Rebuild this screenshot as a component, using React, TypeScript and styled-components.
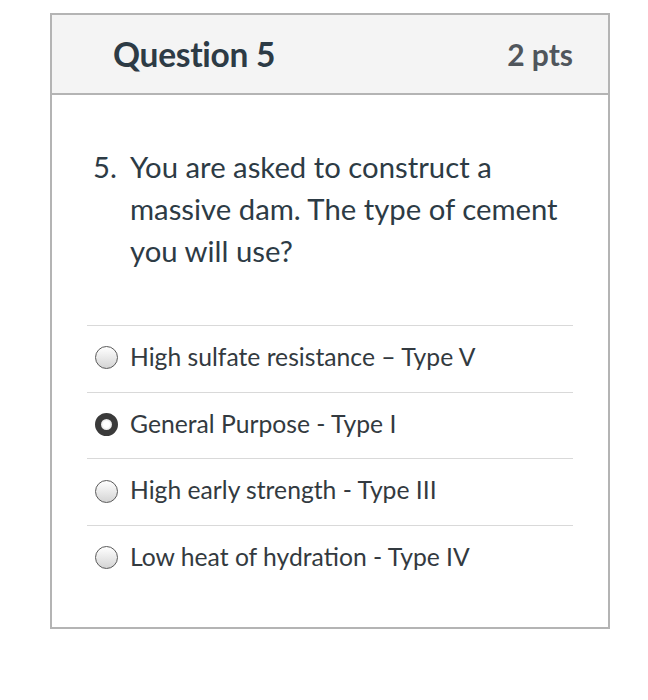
import React from 'react';
import styled, { createGlobalStyle } from 'styled-components';

const GlobalStyle = createGlobalStyle`
  body {
    margin: 0;
    background: #ffffff;
    font-family: 'Lato', 'Liberation Sans', sans-serif;
  }
`;

const Page = styled.div`
  padding: 13px 39px 0 50px;
`;

const Card = styled.div`
  width: 556px;
  border: 2px solid #b4b4b4;
  background: #ffffff;
`;

const Header = styled.div`
  display: flex;
  align-items: center;
  justify-content: space-between;
  height: 78px;
  padding: 0 35px 0 61px;
  background: #f4f4f4;
  border-bottom: 2px solid #b4b4b4;
`;

const Title = styled.h2`
  margin: 0;
  font-size: 33.5px;
  font-weight: 700;
  color: #2d3b45;
  letter-spacing: -0.3px;
`;

const Points = styled.span`
  font-size: 30px;
  font-weight: 700;
  color: #50565c;
`;

const Body = styled.div`
  padding: 51px 35px 35px 35px;
`;

const Question = styled.div`
  display: flex;
  padding-left: 6px;
  font-size: 29.3px;
  line-height: 42px;
  color: #2d3b45;
  margin-bottom: 53px;
`;

const Number = styled.span`
  flex: 0 0 37px;
`;

const OptionList = styled.div`
  display: flex;
  flex-direction: column;
`;

const Option = styled.label`
  box-sizing: border-box;
  display: flex;
  align-items: center;
  gap: 12px;
  height: 66.7px;
  padding: 0 0 5px 8px;
  border-top: 1.5px solid #d9d9d9;
  font-size: 24.7px;
  color: #333a40;
`;

const Radio = styled.span<{ checked?: boolean }>`
  box-sizing: border-box;
  flex: 0 0 23px;
  width: 23px;
  height: 23px;
  margin-top: 3px;
  border-radius: 50%;
  border: ${(p) => (p.checked ? '6px solid #3a3a3a' : '1.5px solid #5a5a5a')};
  background: ${(p) =>
    p.checked
      ? 'radial-gradient(circle, #ffffff 40%, #c8c8c8 100%)'
      : 'linear-gradient(#ffffff, #d4d4d4)'};
`;

const options = [
  { text: 'High sulfate resistance \u2013 Type V', checked: false },
  { text: 'General Purpose - Type I', checked: true },
  { text: 'High early strength - Type III', checked: false },
  { text: 'Low heat of hydration - Type IV', checked: false },
];

export default function App() {
  return (
    <Page>
      <GlobalStyle />
      <Card>
        <Header>
          <Title>Question 5</Title>
          <Points>2 pts</Points>
        </Header>
        <Body>
          <Question>
            <Number>5.</Number>
            <span>
              You are asked to construct a massive dam. The type of cement you will use?
            </span>
          </Question>
          <OptionList>
            {options.map((o) => (
              <Option key={o.text}>
                <Radio checked={o.checked} />
                {o.text}
              </Option>
            ))}
          </OptionList>
        </Body>
      </Card>
    </Page>
  );
}
